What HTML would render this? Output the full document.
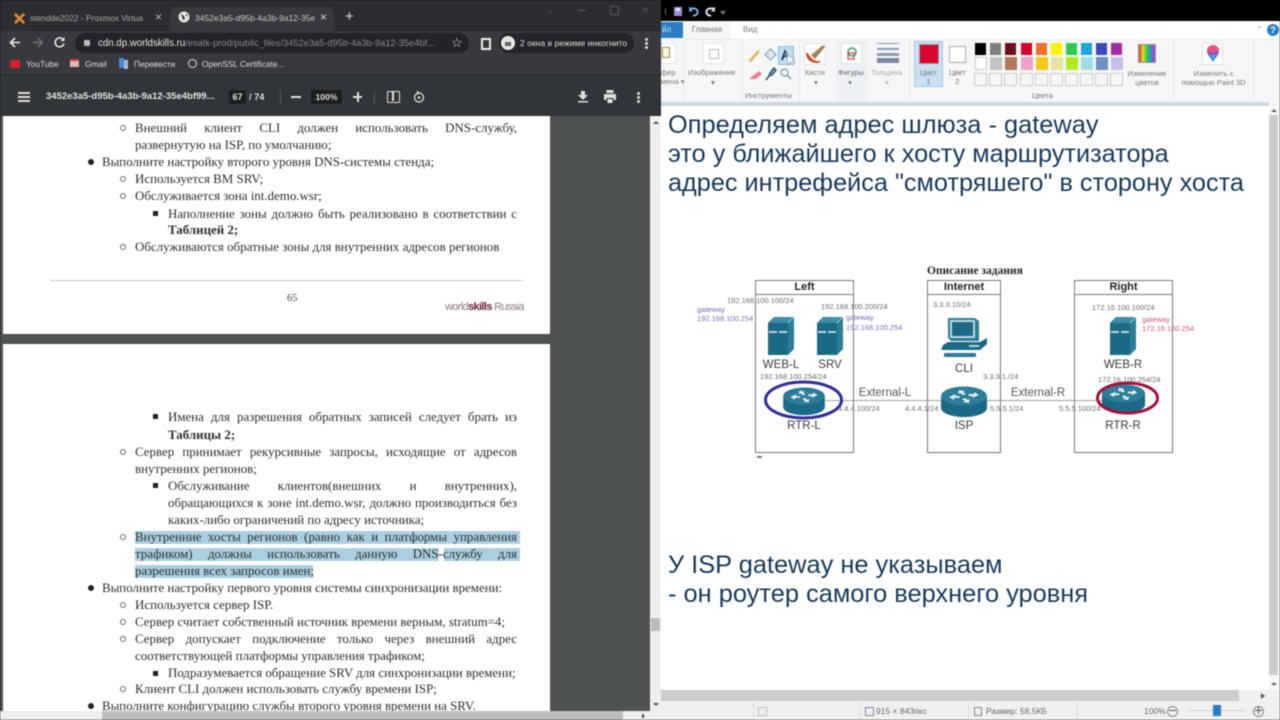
<!DOCTYPE html>
<html lang="ru"><head><meta charset="utf-8"><title>Screenshot</title>
<style>
html,body{margin:0;padding:0;width:1280px;height:720px;overflow:hidden;background:#000}
#root{position:absolute;left:0;top:0;width:1280px;height:720px;overflow:hidden;filter:blur(.5px);font-family:"Liberation Sans",sans-serif}
.a,.t,.s,.u{position:absolute;white-space:nowrap}
.t{font-family:"Liberation Serif",serif;font-size:12.93px;line-height:16px;height:16px;color:#2e2e2e}
.j{text-align:justify;text-align-last:justify;white-space:normal}
.m{left:135px;width:382px}.m2{left:168px;width:349px}.d{left:102px}
.b1,.b2,.b3{position:absolute}
.b1{left:88px;width:6px;height:6px;border-radius:50%;background:#222}
.b2{left:120px;width:4px;height:4px;border-radius:50%;border:1px solid #666;background:#fff}
.b3{left:153px;width:5px;height:5px;background:#222}
.ui{color:#ddd;font-size:8.3px;line-height:12px}
.u{color:#173a5c;font-size:25.4px;line-height:30px;left:668px}
.s{font-size:7.5px;color:#6a6a6a;line-height:9px}
.g{font-size:7.5px;color:#7070b8;line-height:9px;position:absolute;white-space:nowrap}
.l{font-size:11.5px;color:#3a3a3a;line-height:13px;position:absolute;white-space:nowrap;transform:translateX(-50%)}
.box{position:absolute;border:1px solid #777;box-sizing:border-box;background:transparent}
.hd{position:absolute;left:0;right:0;top:0;height:13px;border-bottom:1px solid #777;font-size:11px;font-weight:bold;color:#222;text-align:center;line-height:13px}
.sw{position:absolute;width:11px;height:12px;box-sizing:border-box}
.r2{width:12px;height:13px}
.r3{width:13px;height:13px;border:1px solid #ccc;top:73px}
.rb{position:absolute;font-size:7.5px;color:#777;line-height:9px;text-align:center;white-space:nowrap}
.sep{position:absolute;top:41px;width:1px;height:60px;background:#e6e8ea}
</style></head><body><div id="root">
<svg width="0" height="0" style="position:absolute"><defs>
<symbol id="router" viewBox="0 0 48 32"><path d="M1 10v12c0 5 10 9 23 9s23-4 23-9V10z" fill="#1b6a85"/><ellipse cx="24" cy="10" rx="23" ry="9.5" fill="#2b7d98"/><path d="M9 11l7-3-1 2 5 0-1 2-5 0 0 2zM39 9l-7 3 1-2-5 0 1-2 5 0 0-2zM19 4l6 1-2 1 3 2-3 1-3-2-2 1zM29 17l-6-1 2-1-3-2 3-1 3 2 2-1z" fill="#e3eef2"/></symbol>
<symbol id="server" viewBox="0 0 26 38"><path d="M0 6l6-6h20v32l-6 6H0z" fill="#2b7d98"/><path d="M0 6h20v32H0z" fill="#1b6a85"/><path d="M0 6l6-6h20l-6 6z" fill="#3d8da6"/><path d="M20 6l6-6" stroke="#cfe" stroke-width=".6"/><path d="M1 14h8v2H1zM11 14h8v2h-8z" fill="#bcd7e0"/></symbol>
</defs></svg>

<!-- LEFT: chrome -->
<div class="a" style="left:0;top:0;width:661px;height:720px;background:#4e5253"></div>
<div class="a" style="left:0;top:0;width:661px;height:31px;background:#2b2d30"></div>
<div class="a" style="left:170px;top:7px;width:164px;height:24px;background:#37393c;border-radius:7px 7px 0 0"></div>
<div class="a" style="left:0;top:31px;width:661px;height:24px;background:#37393c"></div>
<div class="a" style="left:0;top:55px;width:661px;height:20px;background:#37393c;border-bottom:1px solid #26282a;box-sizing:border-box"></div>
<div class="a" style="left:0;top:75px;width:661px;height:41px;background:#323537"></div>
<svg class="a" style="left:13px;top:12px" width="13" height="13" viewBox="0 0 14 14"><path d="M2 2l10 10M12 2L2 12" stroke="#d98530" stroke-width="3"/></svg>
<div class="a ui" style="left:30px;top:12px;color:#a8a8a8;font-size:8.4px;width:113px;overflow:hidden">stendde2022 - Proxmox Virtual E</div>
<div class="a" style="left:155px;top:10px;font-size:12px;color:#bbb;line-height:14px">×</div>
<svg class="a" style="left:178px;top:11px" width="12" height="12" viewBox="0 0 12 12"><circle cx="6" cy="6" r="5.5" fill="#e6e6e6"/><path d="M3 3l3 2 1 3-2 1zM8 2l2 3-2 0z" fill="#37393c"/></svg>
<div class="a ui" style="left:195px;top:12px;font-size:8.5px;width:120px;overflow:hidden;color:#c8c8c8">3452e3a5-d95b-4a3b-9a12-35e4bf</div>
<div class="a" style="left:320px;top:10px;font-size:12px;color:#ddd;line-height:14px">×</div>
<div class="a" style="left:345px;top:9px;font-size:15px;color:#ddd;line-height:16px">+</div>
<div class="a" style="left:546px;top:4px;font-size:9px;color:#555;line-height:12px">⌄</div>
<div class="a" style="left:578px;top:10px;width:8px;height:1px;background:#555"></div>
<div class="a" style="left:610px;top:6px;width:7px;height:7px;border:1px solid #555"></div>
<div class="a" style="left:642px;top:3px;font-size:12px;color:#555;line-height:14px">×</div>
<!-- address bar -->
<svg class="a" style="left:9px;top:36px" width="36" height="13" viewBox="0 0 36 13"><path d="M11 6.500H2M6 2L1.500 6.500 6 11" stroke="#e8e8e8" stroke-width="1.600" fill="none"/><path d="M24 6.500h9M29 2l4.500 4.500L29 11" stroke="#777" stroke-width="1.400" fill="none"/></svg>
<svg class="a" style="left:53px;top:36px" width="13" height="13" viewBox="0 0 13 13"><path d="M10.500 4A4.500 4.500 0 1 0 11 7.500" stroke="#e8e8e8" stroke-width="1.500" fill="none"/><path d="M11.500 1v4h-4z" fill="#e8e8e8"/></svg>
<div class="a" style="left:75px;top:33px;width:394px;height:20px;border-radius:10px;background:#222427"></div>
<div class="a" style="left:84px;top:40px;width:6px;height:6px;background:#bbb;border-radius:1px"></div>
<div class="a" style="left:98px;top:37px;font-size:9.7px;line-height:13px;color:#e4e4e4;width:348px;overflow:hidden">cdn.dp.worldskills.ru<span style="color:#85878a;font-size:9.3px">/esatk-prod/public_files/3452e3a5-d95b-4a3b-9a12-35e4bf...</span></div>
<div class="a" style="left:451px;top:35px;font-size:13px;line-height:15px;color:#ddd">☆</div>
<div class="a" style="left:481px;top:38px;width:6px;height:8px;border:2px solid #eee;background:#37393c"></div>
<div class="a" style="left:499px;top:33px;width:135px;height:20px;border-radius:10px;background:#222427"></div>
<div class="a" style="left:501px;top:36px;width:14px;height:14px;border-radius:50%;background:#e5e5e5"></div>
<div class="a" style="left:505px;top:42px;width:6px;height:4px;background:#666"></div>
<div class="a" style="left:520px;top:37px;font-size:8.6px;line-height:12px;color:#dfdfdf">2 окна в режиме инкогнито</div>
<div class="a" style="left:645px;top:38px;width:3px;height:3px;border-radius:50%;background:#ddd;box-shadow:0 4px 0 #ddd,0 8px 0 #ddd"></div>
<!-- bookmarks -->
<div class="a" style="left:10px;top:60px;width:10px;height:8px;background:#d9202a;border-radius:2px"></div>
<div class="a ui" style="left:26px;top:58px">YouTube</div>
<div class="a" style="left:70px;top:59px;width:9px;height:8px;background:#e8b5b0;border-top:2px solid #c83c35;box-sizing:border-box"></div>
<div class="a ui" style="left:85px;top:58px">Gmail</div>
<div class="a" style="left:119px;top:58px;width:5px;height:10px;background:#4a87d8"></div><div class="a" style="left:124px;top:60px;width:4px;height:9px;background:#a6b8d0"></div>
<div class="a ui" style="left:134px;top:58px">Перевести</div>
<div class="a" style="left:188px;top:59px;width:7px;height:7px;border:1px solid #ddd;border-radius:50%"></div>
<div class="a ui" style="left:202px;top:58px">OpenSSL Certificate...</div>
<!-- pdf toolbar -->
<div class="a" style="left:18px;top:92px;width:12px;height:2px;background:#e0e0e0;box-shadow:0 4px 0 #e0e0e0,0 8px 0 #e0e0e0"></div>
<div class="a" style="left:46px;top:90px;font-size:9.5px;font-weight:bold;line-height:13px;color:#e2e2e2">3452e3a5-d95b-4a3b-9a12-35e4bf99...</div>
<div class="a" style="left:229px;top:90px;width:17px;height:14px;background:#1c1d1f;color:#ddd;font-size:9px;font-weight:bold;line-height:14px;text-align:center">67</div>
<div class="a" style="left:249px;top:90px;font-size:9.2px;font-weight:bold;line-height:14px;color:#ddd">/&nbsp;74</div>
<div class="a" style="left:280px;top:90px;width:1px;height:14px;background:#55585b"></div>
<div class="a" style="left:291px;top:96px;width:10px;height:2px;background:#ddd"></div>
<div class="a" style="left:311px;top:90px;width:31px;height:14px;background:#1c1d1f;color:#ddd;font-size:8.6px;font-weight:bold;line-height:14px;text-align:center">100%</div>
<div class="a" style="left:353px;top:96px;width:9px;height:2px;background:#ddd"></div><div class="a" style="left:357px;top:92px;width:2px;height:10px;background:#ddd"></div>
<div class="a" style="left:374px;top:90px;width:1px;height:14px;background:#55585b"></div>
<div class="a" style="left:387px;top:91px;width:11px;height:10px;border:1px solid #ddd;border-radius:1px"></div><div class="a" style="left:392px;top:92px;width:2px;height:9px;background:#ddd"></div>
<svg class="a" style="left:412px;top:90px" width="14" height="14" viewBox="0 0 14 14"><circle cx="7" cy="7.500" r="4.500" stroke="#ddd" stroke-width="1.300" fill="none"/><circle cx="7" cy="7.500" r="1.300" fill="#ddd"/><path d="M5 .5L8 3 5 5z" fill="#ddd"/></svg>
<svg class="a" style="left:577px;top:90px" width="12" height="13" viewBox="0 0 12 13"><path d="M4 1h4v4h3L6 10 1 5h3zM1 11h10v1.500H1z" fill="#e0e0e0"/></svg>
<svg class="a" style="left:603px;top:90px" width="14" height="13" viewBox="0 0 14 13"><path d="M3.500 0h7v3h-7zM1 4h12v6h-2.500V8h-7v2H1zM4.500 9h5v4h-5z" fill="#e0e0e0"/></svg>
<div class="a" style="left:637px;top:92px;width:3px;height:3px;border-radius:50%;background:#ddd;box-shadow:0 4px 0 #ddd,0 8px 0 #ddd"></div>

<!-- PDF pages -->
<div class="a" style="left:3px;top:116px;width:547px;height:218px;background:#fff"></div>
<div class="a" style="left:3px;top:344px;width:547px;height:376px;background:#fff"></div>
<div class="t j m" style="top:120px">Внешний клиент CLI должен использовать DNS-службу,</div>
<div class="b2" style="top:125px"></div>
<div class="t" style="top:137px;left:135px">развернутую на ISP, по умолчанию;</div>
<div class="b1" style="top:159px"></div>
<div class="t d" style="top:154px">Выполните настройку второго уровня DNS-системы стенда;</div>
<div class="b2" style="top:176px"></div>
<div class="t" style="top:171px;left:135px">Используется ВМ SRV;</div>
<div class="b2" style="top:193px"></div>
<div class="t" style="top:188px;left:135px">Обслуживается зона int.demo.wsr;</div>
<div class="b3" style="top:211px"></div>
<div class="t j m2" style="top:206px">Наполнение зоны должно быть реализовано в соответствии с</div>
<div class="t" style="top:222px;left:168px;font-weight:bold">Таблицей 2;</div>
<div class="b2" style="top:244px"></div>
<div class="t" style="top:239px;left:135px">Обслуживаются обратные зоны для внутренних адресов регионов</div>
<div class="a" style="left:50px;top:280px;width:473px;height:1px;background:#ccc"></div>
<div class="t" style="left:287px;top:291px;font-size:10.5px;color:#444">65</div>
<div class="a" style="left:445px;top:301px;font-size:11px;letter-spacing:-.65px;line-height:13px;color:#8c7a80">world<b style="color:#6a1f38">skills</b> Russia</div>

<div class="b3" style="top:414px"></div>
<div class="t j m2" style="top:409px">Имена для разрешения обратных записей следует брать из</div>
<div class="t" style="top:427px;left:168px;font-weight:bold">Таблицы 2;</div>
<div class="b2" style="top:449px"></div>
<div class="t j m" style="top:444px">Сервер принимает рекурсивные запросы, исходящие от адресов</div>
<div class="t" style="top:461px;left:135px">внутренних регионов;</div>
<div class="b3" style="top:483px"></div>
<div class="t j m2" style="top:478px">Обслуживание клиентов(внешних и внутренних),</div>
<div class="t j m2" style="top:495px">обращающихся к зоне int.demo.wsr, должно производиться без</div>
<div class="t" style="top:512px;left:168px">каких-либо ограничений по адресу источника;</div>
<div class="a" style="left:135px;top:531px;width:385px;height:13px;background:#a9cfe0"></div>
<div class="a" style="left:135px;top:548px;width:385px;height:13px;background:#a9cfe0"></div>
<div class="a" style="left:135px;top:565px;width:178px;height:13px;background:#a9cfe0"></div>
<div class="a" style="left:439px;top:548px;width:5px;height:13px;background:#fff"></div>
<div class="b2" style="top:534px"></div>
<div class="t j m" style="top:529px">Внутренние хосты регионов (равно как и платформы управления</div>
<div class="t j m" style="top:546px">трафиком) должны использовать данную DNS-службу для</div>
<div class="t" style="top:563px;left:135px">разрешения всех запросов имен;</div>
<div class="b1" style="top:585px"></div>
<div class="t d" style="top:580px">Выполните настройку первого уровня системы синхронизации времени:</div>
<div class="b2" style="top:602px"></div>
<div class="t" style="top:597px;left:135px">Используется сервер ISP.</div>
<div class="b2" style="top:619px"></div>
<div class="t" style="top:614px;left:135px">Сервер считает собственный источник времени верным, stratum=4;</div>
<div class="b2" style="top:636px"></div>
<div class="t j m" style="top:631px">Сервер допускает подключение только через внешний адрес</div>
<div class="t" style="top:648px;left:135px">соответствующей платформы управления трафиком;</div>
<div class="b3" style="top:671px"></div>
<div class="t" style="top:665px;left:168px">Подразумевается обращение SRV для синхронизации времени;</div>
<div class="b2" style="top:686px"></div>
<div class="t" style="top:681px;left:135px">Клиент CLI должен использовать службу времени ISP;</div>
<div class="b1" style="top:703px"></div>
<div class="t d" style="top:698px">Выполните конфигурацию службы второго уровня времени на SRV.</div>
<!-- left scrollbars -->
<div class="a" style="left:650px;top:116px;width:11px;height:604px;background:#f0f0f0"></div>
<div class="a" style="left:651px;top:618px;width:9px;height:13px;background:#bbb"></div>
<div class="a" style="left:653px;top:121px;width:0;height:0;border:3px solid transparent;border-bottom:3px solid #555;border-top:0"></div>
<div class="a" style="left:653px;top:703px;width:0;height:0;border:3px solid transparent;border-top:3px solid #555;border-bottom:0"></div>
<div class="a" style="left:0;top:711px;width:650px;height:9px;background:#eee"></div>
<div class="a" style="left:102px;top:711px;width:521px;height:9px;background:#bdbdbd"></div>
<div class="a" style="left:642px;top:713px;width:0;height:0;border:3px solid transparent;border-left:3px solid #555;border-right:0"></div>

<!-- RIGHT: paint -->
<div class="a" style="left:661px;top:0;width:619px;height:21px;background:#000"></div>
<div class="a" style="left:665px;top:8px;width:1px;height:7px;background:#666"></div>
<div class="a" style="left:674px;top:7px;width:8px;height:9px;background:#9a8cd8"></div><div class="a" style="left:676px;top:8px;width:4px;height:3px;background:#e8e4ff"></div>
<svg class="a" style="left:688px;top:6px" width="28" height="11" viewBox="0 0 28 11"><path d="M2 2.500h4a3.500 3.500 0 1 1-1 6.800" stroke="#6cb0e0" stroke-width="2" fill="none"/><path d="M1 .5v5h4z" fill="#6cb0e0"/><path d="M26 2.500h-4a3.500 3.500 0 1 0 1 6.800" stroke="#dde" stroke-width="2" fill="none"/><path d="M27 .5v5h-4z" fill="#dde"/></svg>
<div class="a" style="left:720px;top:11px;width:0;height:0;border:3px solid transparent;border-top:4px solid #777"></div>
<!-- tabs -->
<div class="a" style="left:661px;top:21px;width:619px;height:85px;background:#f5f6f7"></div>
<div class="a" style="left:661px;top:21px;width:619px;height:18px;background:#fff"></div>
<div class="a" style="left:661px;top:22px;width:22px;height:16px;background:#2a7fc4;color:#cfe3f4;font-size:8px;line-height:16px;text-indent:1px;box-sizing:border-box;overflow:hidden">йл</div>
<div class="a" style="left:683px;top:21px;width:48px;height:19px;background:#f5f6f7;color:#777;font-size:8px;line-height:18px;text-align:center">Главная</div>
<div class="a" style="left:743px;top:21px;color:#777;font-size:8px;line-height:18px">Вид</div>
<div class="a" style="left:1256px;top:27px;font-size:8px;line-height:6px;color:#999">⌃</div>
<div class="a" style="left:1267px;top:24px;width:12px;height:12px;border-radius:50%;background:#2a7fc4;color:#fff;font-size:9px;font-weight:bold;line-height:12px;text-align:center">?</div>
<div class="a" style="left:661px;top:39px;width:619px;height:1px;background:#e6e8ea"></div>
<div class="a" style="left:661px;top:102px;width:608px;height:4px;background:#cfd8de"></div>
<!-- clipboard -->
<div class="a" style="left:661px;top:43px;width:15px;height:21px;background:#fff;border:1px solid #e0e4e8;box-sizing:border-box"></div>
<div class="a" style="left:662px;top:47px;width:6px;height:9px;border:1px solid #a58a4a;background:#fdf6e0"></div>
<div class="rb" style="left:661px;top:68px;text-align:left">фер</div>
<div class="rb" style="left:661px;top:77px;text-align:left">мена ▾</div>
<div class="a" style="left:703px;top:43px;width:21px;height:21px;background:#fff;border:1px solid #e0e6ec;box-sizing:border-box"></div>
<div class="a" style="left:709px;top:49px;width:8px;height:8px;border:1px solid #bbb"></div>
<div class="rb" style="left:688px;top:68px">Изображение</div>
<div class="rb" style="left:711px;top:78px">▾</div>
<div class="sep" style="left:684px"></div><div class="sep" style="left:742px"></div>
<!-- tools -->
<svg class="a" style="left:746px;top:46px" width="18" height="34" viewBox="0 0 18 34"><path d="M2 15L12 4l2 2L5 16z" fill="#e2b660"/><path d="M3 33l10-8 3 3-6 5z" fill="#ef7f8f"/></svg>
<svg class="a" style="left:763px;top:48px" width="15" height="13" viewBox="0 0 16 14"><path d="M2 7l6-6 6 6-6 6z" fill="#d9e6f0" stroke="#7f95a8"/></svg>
<svg class="a" style="left:765px;top:67px" width="12" height="14" viewBox="0 0 12 14"><path d="M9 1l2 2-4 5-3 1 1-3zM4 9l-3 4" stroke="#356" stroke-width="1.500" fill="#6fb4d8"/></svg>
<div class="a" style="left:778px;top:46px;width:16px;height:19px;background:#bcdcf4;border:1px solid #8fbde0;box-sizing:border-box"></div>
<svg class="a" style="left:780px;top:48px" width="18" height="18" viewBox="0 0 18 18"><path d="M5 1L1 12h2l1-3h3l1 3h2zM4.500 7.500L5.500 4l1 3.500z" fill="#234"/><path d="M7 7l1 10 2.500-3 3.500 2 1-1.500-3-2 3-1z" fill="#fff" stroke="#999" stroke-width=".7"/></svg>
<svg class="a" style="left:780px;top:68px" width="12" height="12" viewBox="0 0 12 12"><circle cx="4.500" cy="4.500" r="3.500" fill="none" stroke="#79a" stroke-width="1.200"/><path d="M7 7l4 4" stroke="#79a" stroke-width="1.500"/></svg>
<div class="rb" style="left:745px;top:91px">Инструменты</div>
<div class="sep" style="left:799px"></div>
<!-- brushes -->
<div class="a" style="left:804px;top:43px;width:22px;height:22px;background:#fff;border:1px solid #dfe3e8;box-sizing:border-box"></div>
<svg class="a" style="left:805px;top:44px" width="21" height="21" viewBox="0 0 21 21"><path d="M1 9c0 6 4 10 11 10 2 0 4-1 4-2-6 1-10-2-13-8z" fill="#c44f2e"/><path d="M6 11L18 1l2 2-10 12z" fill="#a58357"/></svg>
<div class="rb" style="left:805px;top:68px">Кисти</div><div class="rb" style="left:814px;top:78px">▾</div>
<!-- shapes -->
<div class="a" style="left:836px;top:41px;width:32px;height:60px;background:#eef1f3"></div>
<div class="a" style="left:841px;top:43px;width:21px;height:21px;background:#fff;border:1px solid #dfe3e8;box-sizing:border-box"></div>
<svg class="a" style="left:845px;top:47px" width="14" height="13" viewBox="0 0 14 13"><circle cx="7" cy="5" r="4" fill="none" stroke="#3a9a5e" stroke-width="1.500"/><rect x="3" y="6" width="6" height="6" fill="none" stroke="#c9505e" stroke-width="1.300"/></svg>
<div class="rb" style="left:838px;top:68px;color:#666">Фигуры</div><div class="rb" style="left:848px;top:78px">▾</div>
<!-- size -->
<div class="a" style="left:877px;top:43px;width:22px;height:1px;background:#8d9ab5"></div>
<div class="a" style="left:877px;top:48px;width:22px;height:2px;background:#8d9ab5"></div>
<div class="a" style="left:877px;top:53px;width:22px;height:3px;background:#8d9ab5"></div>
<div class="a" style="left:877px;top:58px;width:22px;height:5px;background:#7c88a6"></div>
<div class="rb" style="left:871px;top:68px;color:#aaa">Толщина</div><div class="rb" style="left:885px;top:78px;color:#bbb">▾</div>
<div class="sep" style="left:909px"></div>
<!-- colors -->
<div class="a" style="left:914px;top:41px;width:29px;height:46px;background:#c9e0f4;border:1px solid #aacbe6;box-sizing:border-box"></div>
<div class="a" style="left:919px;top:44px;width:20px;height:20px;background:#d8062c;border:1px solid #999;box-sizing:border-box"></div>
<div class="rb" style="left:914px;width:29px;top:68px">Цвет<br>1</div>
<div class="a" style="left:949px;top:46px;width:17px;height:17px;background:#fff;border:1px solid #aaa;box-sizing:border-box"></div>
<div class="rb" style="left:943px;width:29px;top:68px">Цвет<br>2</div>
<div class="sw" style="left:975px;top:43px;background:#000"></div>
<div class="sw" style="left:990px;top:43px;background:#7f7f7f"></div>
<div class="sw" style="left:1005px;top:43px;background:#6b0f1a"></div>
<div class="sw" style="left:1021px;top:43px;background:#d0062c"></div>
<div class="sw" style="left:1036px;top:43px;background:#e8702a"></div>
<div class="sw" style="left:1051px;top:43px;background:#fff200"></div>
<div class="sw" style="left:1066px;top:43px;background:#2fc94f"></div>
<div class="sw" style="left:1081px;top:43px;background:#1fa6d8"></div>
<div class="sw" style="left:1096px;top:43px;background:#3f48b8"></div>
<div class="sw" style="left:1111px;top:43px;background:#a32ca4"></div>
<div class="sw r2" style="left:975px;top:57px;background:#fff;border:1px solid #ccc"></div>
<div class="sw r2" style="left:990px;top:57px;background:#c3c3c3"></div>
<div class="sw r2" style="left:1005px;top:57px;background:#b07a5a"></div>
<div class="sw r2" style="left:1021px;top:57px;background:#f0a0c8"></div>
<div class="sw r2" style="left:1036px;top:57px;background:#f5c818"></div>
<div class="sw r2" style="left:1051px;top:57px;background:#e8e4a0"></div>
<div class="sw r2" style="left:1066px;top:57px;background:#b0ea20"></div>
<div class="sw r2" style="left:1081px;top:57px;background:#a0dce8"></div>
<div class="sw r2" style="left:1096px;top:57px;background:#7090c0"></div>
<div class="sw r2" style="left:1111px;top:57px;background:#c8bfe7"></div>
<div class="sw r3" style="left:974px"></div><div class="sw r3" style="left:989px"></div><div class="sw r3" style="left:1004px"></div><div class="sw r3" style="left:1020px"></div><div class="sw r3" style="left:1035px"></div><div class="sw r3" style="left:1050px"></div><div class="sw r3" style="left:1065px"></div><div class="sw r3" style="left:1080px"></div><div class="sw r3" style="left:1095px"></div><div class="sw r3" style="left:1110px"></div>
<div class="rb" style="left:1032px;top:91px">Цвета</div>
<div class="a" style="left:1138px;top:44px;width:18px;height:19px;background:linear-gradient(90deg,#d33,#dd3,#3c3,#38d,#c3c);border:1px solid #999;box-sizing:border-box"></div>
<div class="rb" style="left:1124px;width:46px;top:69px">Изменение<br>цветов</div>
<div class="sep" style="left:1173px"></div>
<div class="a" style="left:1202px;top:43px;width:21px;height:22px;background:#fff;border:1px solid #e2e5e8;box-sizing:border-box"></div>
<svg class="a" style="left:1206px;top:45px" width="14" height="18" viewBox="0 0 14 18"><path d="M7 17C3 11 1 9 1 6a6 6 0 0 1 12 0c0 3-2 5-6 11z" fill="#8a4fd0"/><path d="M1 6a6 6 0 0 1 12 0c-3 2-9 2-12 0z" fill="#e8547a"/><path d="M3 9c2 1 6 1 8 0l-4 8z" fill="#3fa0e0"/></svg>
<div class="rb" style="left:1179px;width:69px;top:69px">Изменить с<br>помощью Paint 3D</div>
<div class="sep" style="left:1253px"></div>
<!-- canvas -->
<div class="a" style="left:661px;top:106px;width:619px;height:584px;background:#fff"></div>
<div class="u" style="top:110px">Определяем адрес шлюза - gateway</div>
<div class="u" style="top:139px;font-size:25.27px">это у ближайшего к хосту маршрутизатора</div>
<div class="u" style="top:168px;font-size:25.27px">адрес интрефейса "смотряшего" в сторону хоста</div>
<div class="u" style="top:550px">У ISP gateway не указываем</div>
<div class="u" style="top:579px">- он роутер самого верхнего уровня</div>
<!-- diagram -->
<div class="a" style="left:927px;top:264px;font-family:'Liberation Serif',serif;font-weight:bold;font-size:11.5px;line-height:14px;color:#222">Описание задания</div>
<div class="a" style="left:825px;top:400px;width:278px;height:1px;background:#a0a0a0"></div>
<div class="box" style="left:755px;top:280px;width:99px;height:173px"><div class="hd">Left</div></div>
<div class="box" style="left:927px;top:280px;width:74px;height:173px"><div class="hd">Internet</div></div>
<div class="box" style="left:1074px;top:280px;width:99px;height:173px"><div class="hd">Right</div></div>
<svg class="a" style="left:768px;top:317px" width="26" height="38"><use href="#server"/></svg>
<svg class="a" style="left:817px;top:317px" width="26" height="38"><use href="#server"/></svg>
<svg class="a" style="left:1110px;top:317px" width="26" height="38"><use href="#server"/></svg>
<svg class="a" style="left:781px;top:387px" width="46" height="29"><use href="#router"/></svg>
<svg class="a" style="left:940px;top:386px" width="48" height="32"><use href="#router"/></svg>
<svg class="a" style="left:1100px;top:384px" width="47" height="30"><use href="#router"/></svg>
<svg class="a" style="left:941px;top:317px" width="47" height="42" viewBox="0 0 47 42"><path d="M7 1h27l4 3v20H10l-3-3z" fill="#2b7d98"/><path d="M9 3h25v18H9z" fill="#bcd7e0"/><path d="M11 5h21v14H11z" fill="#1b6a85"/><path d="M7 25h32l7-4v6l-7 6H0l2-5z" fill="#1b6a85"/><path d="M28 28h10v2H28z" fill="#bcd7e0"/><path d="M3 36h32v4H3z" fill="#2b7d98"/></svg>
<svg class="a" style="left:760px;top:378px" width="90" height="44"><ellipse cx="43.500" cy="22" rx="38" ry="18" fill="none" stroke="#2f2f9a" stroke-width="3"/></svg>
<svg class="a" style="left:1092px;top:378px" width="72" height="40"><ellipse cx="35.500" cy="20" rx="30" ry="15" fill="none" stroke="#a5123a" stroke-width="3"/></svg>
<div class="l" style="left:781px;top:359px">WEB-L</div>
<div class="l" style="left:830px;top:359px">SRV</div>
<div class="l" style="left:804px;top:420px">RTR-L</div>
<div class="l" style="left:964px;top:363px">CLI</div>
<div class="l" style="left:964px;top:420px">ISP</div>
<div class="l" style="left:1123px;top:359px">WEB-R</div>
<div class="l" style="left:1123px;top:420px">RTR-R</div>
<div class="l" style="left:885px;top:387px;color:#555">External-L</div>
<div class="l" style="left:1038px;top:387px;color:#555">External-R</div>
<div class="s" style="left:727px;top:296px">192.168.100.100/24</div>
<div class="s" style="left:821px;top:302px">192.168.100.200/24</div>
<div class="s" style="left:760px;top:372px">192.168.100.254/24</div>
<div class="s" style="left:838px;top:404px">4.4.4.100/24</div>
<div class="s" style="left:905px;top:404px">4.4.4.1/24</div>
<div class="s" style="left:933px;top:300px">3.3.3.10/24</div>
<div class="s" style="left:983px;top:372px">3.3.3.1./24</div>
<div class="s" style="left:990px;top:404px">5.5.5.1/24</div>
<div class="s" style="left:1059px;top:404px">5.5.5.100/24</div>
<div class="s" style="left:1092px;top:303px">172.16.100.100/24</div>
<div class="s" style="left:1098px;top:375px">172.16.100.254/24</div>
<div class="g" style="left:697px;top:305px">gateway</div>
<div class="g" style="left:697px;top:314px">192.168.100.254</div>
<div class="g" style="left:846px;top:313px">gateway</div>
<div class="g" style="left:846px;top:323px">192.168.100.254</div>
<div class="g" style="left:1142px;top:315px;color:#c4587c">gateway</div>
<div class="g" style="left:1142px;top:324px;color:#c4587c">172.16.100.254</div>
<div class="a" style="left:757px;top:456px;width:5px;height:2px;background:#777"></div>
<!-- paint scrollbars -->
<div class="a" style="left:1269px;top:106px;width:11px;height:596px;background:#f8f8f8"></div>
<div class="a" style="left:1269px;top:115px;width:9px;height:560px;background:#cdcdcd"></div>
<div class="a" style="left:1271px;top:109px;width:0;height:0;border:3px solid transparent;border-bottom:3px solid #666;border-top:0"></div>
<div class="a" style="left:1271px;top:683px;width:0;height:0;border:3px solid transparent;border-top:3px solid #666;border-bottom:0"></div>
<div class="a" style="left:661px;top:690px;width:619px;height:12px;background:#f0f0f0"></div>
<div class="a" style="left:661px;top:690px;width:578px;height:11px;background:#cdcdcd"></div>
<div class="a" style="left:1261px;top:693px;width:0;height:0;border:3px solid transparent;border-left:4px solid #555;border-right:0"></div>
<!-- statusbar -->
<div class="a" style="left:661px;top:702px;width:619px;height:18px;background:#f0f0f0"></div>
<div class="a" style="left:753px;top:702px;width:1px;height:18px;background:#ddd"></div>
<div class="a" style="left:860px;top:702px;width:1px;height:18px;background:#ddd"></div>
<div class="a" style="left:968px;top:702px;width:1px;height:18px;background:#ddd"></div>
<div class="a" style="left:1077px;top:702px;width:1px;height:18px;background:#ddd"></div>
<div class="a" style="left:758px;top:707px;width:7px;height:7px;border:1px dotted #889"></div>
<div class="a" style="left:865px;top:707px;width:7px;height:7px;border:1px solid #889"></div>
<div class="a" style="left:876px;top:705px;font-size:8.5px;color:#666;line-height:12px">915 × 843пкс</div>
<div class="a" style="left:974px;top:707px;width:6px;height:7px;border:1px solid #889"></div>
<div class="a" style="left:986px;top:705px;font-size:8.5px;color:#666;line-height:12px">Размер: 58,5КБ</div>
<div class="a" style="left:1144px;top:705px;font-size:8.5px;color:#666;line-height:12px">100%</div>
<div class="a" style="left:1167px;top:706px;width:9px;height:9px;border:1px solid #888;border-radius:50%"></div><div class="a" style="left:1169px;top:710px;width:7px;height:1px;background:#555"></div>
<div class="a" style="left:1188px;top:710px;width:57px;height:1px;background:#cfcfcf"></div>
<div class="a" style="left:1213px;top:705px;width:8px;height:11px;background:#2a7fc4"></div>
<div class="a" style="left:1253px;top:706px;width:9px;height:9px;border:1px solid #888;border-radius:50%"></div><div class="a" style="left:1255px;top:710px;width:7px;height:1px;background:#555"></div><div class="a" style="left:1258px;top:707px;width:1px;height:7px;background:#555"></div>
</div></body></html>
